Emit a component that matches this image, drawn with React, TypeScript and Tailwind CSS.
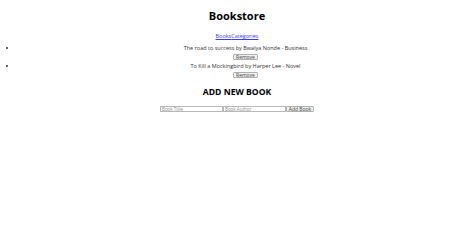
import React from "react";

export default function App() {
  const books = [
    { title: "The road to success", author: "Bwalya Nonde", category: "Business" },
    { title: "To Kill a Mockingbird", author: "Harper Lee", category: "Novel" },
  ];
  return (
    <div className="w-[474px] h-[213px] bg-white text-[#333] font-['Open_Sans','Noto_Sans',sans-serif] text-[5.5px]">
      <header className="flex flex-col items-center">
        <h1 className="mt-[8px] text-[11px] leading-[15px] font-bold text-black">Bookstore</h1>
        <nav className="mt-[10px] flex leading-[7px]">
          <a href="#" className="text-[#3a3ae8] underline">Books</a>
          <a href="#" className="text-[#3a3ae8] underline">Categories</a>
        </nav>
      </header>
      <ul className="mt-[5px] pl-[17px] list-disc flex flex-col gap-[2px]">
        {books.map((b) => (
          <li key={b.title} className="text-center leading-[7px]">
            <p>
              {b.title} by {b.author} - {b.category}
            </p>
            <button className="mt-[2px] h-[6px] px-[2px] leading-[4px] text-[5px] text-[#444] bg-[#f0f0f0] border-[0.5px] border-[#b0b0b0] rounded-[1px]">
              Remove
            </button>
          </li>
        ))}
      </ul>
      <h2 className="mt-[8px] text-center text-[8.6px] leading-[10px] font-bold text-black">ADD NEW BOOK</h2>
      <form className="mt-[9px] flex justify-center">
        <input
          placeholder="Book Title"
          className="w-[63px] h-[6px] px-[1px] text-[4.5px] border-[0.5px] border-[#b8b8b8] placeholder:text-[#8a8a8a]"
        />
        <input
          placeholder="Book Author"
          className="w-[63px] h-[6px] px-[1px] text-[4.5px] border-[0.5px] border-[#b8b8b8] placeholder:text-[#8a8a8a]"
        />
        <button
          type="button"
          className="w-[28px] h-[6px] text-[5px] leading-[4px] text-[#444] bg-[#f0f0f0] border-[0.5px] border-[#b0b0b0] rounded-[1px]"
        >
          Add Book
        </button>
      </form>
    </div>
  );
}
